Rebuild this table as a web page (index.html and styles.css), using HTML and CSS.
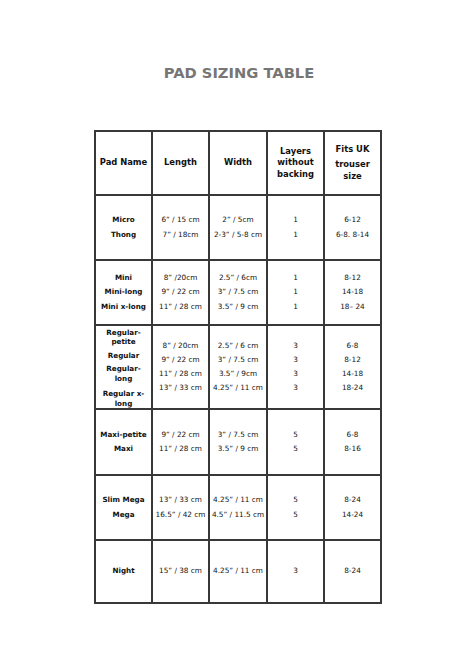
FILE: index.html
```html
<!DOCTYPE html>
<html>
<head>
<meta charset="utf-8">
<link rel="stylesheet" href="styles.css">
</head>
<body>
<div class="page">
  <h1 class="title">PAD SIZING TABLE</h1>
  <div class="grid">
    <div class="cell head">Pad Name</div>
    <div class="cell head">Length</div>
    <div class="cell head">Width</div>
    <div class="cell head tight"><div>Layers</div><div>without</div><div>backing</div></div>
    <div class="cell head fits"><div class="fu">Fits UK</div><div class="tight"><div>trouser</div><div>size</div></div></div>

    <div class="cell name"><div>Micro</div><div>Thong</div></div>
    <div class="cell data"><div>6” / 15 cm</div><div>7” / 18cm</div></div>
    <div class="cell data"><div>2” / 5cm</div><div>2-3” / 5-8 cm</div></div>
    <div class="cell data"><div>1</div><div>1</div></div>
    <div class="cell data"><div>6-12</div><div>6-8. 8-14</div></div>

    <div class="cell name"><div>Mini</div><div>Mini-long</div><div>Mini x-long</div></div>
    <div class="cell data"><div>8” /20cm</div><div>9” / 22 cm</div><div>11” / 28 cm</div></div>
    <div class="cell data"><div>2.5” / 6cm</div><div>3” / 7.5 cm</div><div>3.5” / 9 cm</div></div>
    <div class="cell data"><div>1</div><div>1</div><div>1</div></div>
    <div class="cell data"><div>8-12</div><div>14-18</div><div>18– 24</div></div>

    <div class="cell name stack"><div>Regular-<br>petite</div><div>Regular</div><div>Regular-<br>long</div><div class="last">Regular x-<br>long</div></div>
    <div class="cell data d4"><div>8” / 20cm</div><div>9” / 22 cm</div><div>11” / 28 cm</div><div>13” / 33 cm</div></div>
    <div class="cell data d4"><div>2.5” / 6 cm</div><div>3” / 7.5 cm</div><div>3.5” / 9cm</div><div>4.25” / 11 cm</div></div>
    <div class="cell data d4"><div>3</div><div>3</div><div>3</div><div>3</div></div>
    <div class="cell data d4"><div>6-8</div><div>8-12</div><div>14-18</div><div>18-24</div></div>

    <div class="cell name"><div>Maxi-petite</div><div>Maxi</div></div>
    <div class="cell data"><div>9” / 22 cm</div><div>11” / 28 cm</div></div>
    <div class="cell data"><div>3” / 7.5 cm</div><div>3.5” / 9 cm</div></div>
    <div class="cell data"><div>5</div><div>5</div></div>
    <div class="cell data"><div>6-8</div><div>8-16</div></div>

    <div class="cell name"><div>Slim Mega</div><div>Mega</div></div>
    <div class="cell data"><div>13” / 33 cm</div><div>16.5” / 42 cm</div></div>
    <div class="cell data"><div>4.25” / 11 cm</div><div>4.5” / 11.5 cm</div></div>
    <div class="cell data"><div>5</div><div>5</div></div>
    <div class="cell data"><div>8-24</div><div>14-24</div></div>

    <div class="cell name"><div>Night</div></div>
    <div class="cell data"><div>15” / 38 cm</div></div>
    <div class="cell data"><div>4.25” / 11 cm</div></div>
    <div class="cell data"><div>3</div></div>
    <div class="cell data"><div>8-24</div></div>
  </div>
</div>
</body>
</html>
```

FILE: styles.css
```css
html, body {
  margin: 0;
  padding: 0;
  background: #ffffff;
}
body {
  width: 474px;
  height: 670px;
  font-family: "DejaVu Sans", Verdana, sans-serif;
  color: #111111;
}
.page {
  padding-top: 64px;
}
.title {
  margin: 0 0 49px 0;
  font-size: 14.7px;
  line-height: 17px;
  font-weight: bold;
  color: #767676;
  text-align: center;
  padding-left: 4px;
}
.grid {
  display: grid;
  grid-template-columns: 57px 57px 58px 57px 57px;
  grid-template-rows: 64px 65px 65px 84px 66px 65px 63px;
  width: max-content;
  margin-left: 94px;
  border-top: 2px solid #383838;
  border-left: 2px solid #383838;
}
.cell {
  box-sizing: border-box;
  border-right: 2px solid #383838;
  border-bottom: 2px solid #383838;
  display: flex;
  flex-direction: column;
  justify-content: center;
  align-items: center;
  text-align: center;
  white-space: nowrap;
}
.head {
  font-weight: bold;
  font-size: 8.4px;
  line-height: 11.5px;
}
.fits .fu {
  margin-bottom: 4px;
}
.tight {
  line-height: 11.5px;
}
.name {
  font-weight: bold;
  font-size: 7.2px;
  line-height: 14.5px;
}
.name.stack {
  line-height: 9.5px;
  gap: 4px;
  padding-top: 2px;
}
.name.stack .last {
  margin-top: 2px;
}
.data {
  font-size: 7.3px;
  line-height: 14.5px;
}
.data.d4 {
  line-height: 14px;
}
```
